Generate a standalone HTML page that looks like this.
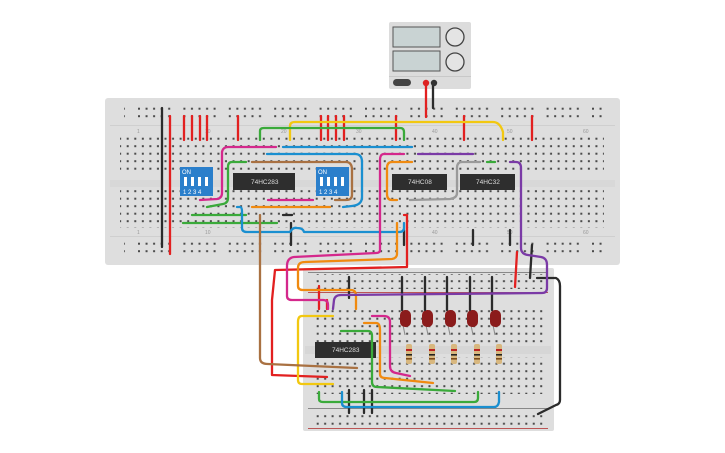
<!DOCTYPE html>
<html><head><style>
html,body{margin:0;padding:0;background:#fff;width:725px;height:453px;overflow:hidden}
svg{display:block}
text{font-family:"Liberation Sans",sans-serif}
</style></head><body>
<svg width="725" height="453" viewBox="0 0 725 453" xmlns="http://www.w3.org/2000/svg">
<defs>
<pattern id="h" x="124" y="0" width="7.56" height="7.5" patternUnits="userSpaceOnUse"><rect x="2.7" y="2.7" width="2" height="2" fill="#4a4a4a"/></pattern>
<pattern id="hr" x="138" y="0" width="45.4" height="7.5" patternUnits="userSpaceOnUse">
<rect x="0" y="2.7" width="2" height="2" fill="#4a4a4a"/><rect x="7.56" y="2.7" width="2" height="2" fill="#4a4a4a"/><rect x="15.1" y="2.7" width="2" height="2" fill="#4a4a4a"/><rect x="22.7" y="2.7" width="2" height="2" fill="#4a4a4a"/><rect x="30.2" y="2.7" width="2" height="2" fill="#4a4a4a"/></pattern>
<pattern id="hs" x="314" y="0" width="7.45" height="7.5" patternUnits="userSpaceOnUse"><rect x="2.7" y="2.7" width="2" height="2" fill="#4a4a4a"/></pattern>
</defs>
<!-- power supply -->
<rect x="389" y="22" width="82" height="67" rx="2" fill="#dcdcdc"/>
<rect x="393" y="27" width="47" height="20" fill="#c9d3d3" stroke="#555" stroke-width="1"/>
<rect x="393" y="51" width="47" height="20" fill="#c9d3d3" stroke="#555" stroke-width="1"/>
<circle cx="455" cy="37" r="9" fill="#e4e4e4" stroke="#444" stroke-width="1.3"/>
<circle cx="455" cy="62" r="9" fill="#e4e4e4" stroke="#444" stroke-width="1.3"/>
<rect x="393" y="79" width="18" height="7" rx="3.5" fill="#444"/>
<rect x="389" y="76" width="82" height="1" fill="#c8c8c8"/>
<!-- main breadboard -->
<rect x="105" y="98" width="515" height="167" rx="3" fill="#dedede"/>
<rect x="110" y="125" width="505" height="1" fill="#cfcfcf"/>
<rect x="110" y="236" width="505" height="1" fill="#cfcfcf"/>
<rect x="110" y="180" width="505" height="7" fill="#d8d8d8"/>
<rect x="124" y="106" width="480" height="16" fill="url(#hr)"/>
<rect x="124" y="241" width="480" height="16" fill="url(#hr)"/>
<rect x="120" y="136" width="484" height="38" fill="url(#h)"/>
<rect x="120" y="190" width="484" height="38" fill="url(#h)"/>
<g font-size="5" fill="#999"><text x="137" y="133">1</text><text x="205" y="133">10</text><text x="281" y="133">20</text><text x="356" y="133">30</text><text x="432" y="133">40</text><text x="507" y="133">50</text><text x="583" y="133">60</text>
<text x="137" y="234">1</text><text x="205" y="234">10</text><text x="432" y="234">40</text><text x="507" y="234">50</text><text x="583" y="234">60</text></g>
<!-- small breadboard -->
<rect x="303" y="268" width="251" height="163" rx="2" fill="#dedede"/>
<rect x="308" y="272" width="240" height="1" fill="#888"/><rect x="308" y="292" width="240" height="1" fill="#b55"/>
<rect x="308" y="408" width="240" height="1" fill="#888"/><rect x="308" y="428" width="240" height="1" fill="#b55"/>
<rect x="305" y="346" width="246" height="8" fill="#d6d6d6"/>
<rect x="314" y="274" width="230" height="15" fill="url(#hs)"/>
<rect x="314" y="410" width="230" height="15" fill="url(#hs)"/>
<rect x="314" y="306" width="230" height="37" fill="url(#hs)"/>
<rect x="314" y="357" width="230" height="37" fill="url(#hs)"/>
<!-- ICs and DIPs -->
<rect x="233" y="173" width="62" height="17" fill="#2e2e2e"/><text x="251" y="184" font-size="6.5" fill="#ddd" font-family="Liberation Mono">74HC283</text>
<rect x="392" y="174" width="55" height="16" fill="#2e2e2e"/><text x="408" y="184" font-size="6.5" fill="#ddd" font-family="Liberation Mono">74HC08</text>
<rect x="460" y="174" width="55" height="16" fill="#2e2e2e"/><text x="476" y="184" font-size="6.5" fill="#ddd" font-family="Liberation Mono">74HC32</text>
<rect x="315" y="342" width="61" height="16" fill="#2e2e2e"/><text x="332" y="352" font-size="6.5" fill="#ddd" font-family="Liberation Mono">74HC283</text>
<g fill="#2b7fcb"><rect x="180" y="167" width="33" height="29"/><rect x="316" y="167" width="33" height="29"/></g>
<g fill="#fff" font-size="6"><text x="182" y="174">ON</text><text x="318" y="174">ON</text>
<text x="183" y="194">1 2 3 4</text><text x="319" y="194">1 2 3 4</text>
<rect x="184" y="177" width="3" height="9"/><rect x="191" y="177" width="3" height="9"/><rect x="198" y="177" width="3" height="9"/><rect x="205" y="177" width="3" height="9"/>
<rect x="320" y="177" width="3" height="9"/><rect x="327" y="177" width="3" height="9"/><rect x="334" y="177" width="3" height="9"/><rect x="341" y="177" width="3" height="9"/></g>
<!-- LEDs and resistors -->
<g stroke="#888" stroke-width="1"><line x1="403" y1="325" x2="405" y2="335"/><line x1="426" y1="325" x2="428" y2="335"/><line x1="448" y1="325" x2="450" y2="335"/><line x1="471" y1="325" x2="473" y2="335"/><line x1="493" y1="325" x2="495" y2="335"/></g>
<g fill="#8b1c1c"><rect x="400" y="310" width="11" height="17" rx="5"/><rect x="422" y="310" width="11" height="17" rx="5"/><rect x="445" y="310" width="11" height="17" rx="5"/><rect x="467" y="310" width="11" height="17" rx="5"/><rect x="490" y="310" width="11" height="17" rx="5"/></g>
<g fill="#d8b77e"><rect x="406" y="344" width="6" height="20" rx="2"/><rect x="429" y="344" width="6" height="20" rx="2"/><rect x="451" y="344" width="6" height="20" rx="2"/><rect x="474" y="344" width="6" height="20" rx="2"/><rect x="496" y="344" width="6" height="20" rx="2"/></g>
<!-- wires -->
<g fill="none" stroke-width="2.3" stroke-linecap="round" stroke-linejoin="round">
<g stroke="#e22020">
<path d="M184 116V140M192 116V140M200 116V140M207 116V140M238 116V140M321 116V140M328 116V140M336 116V140M344 116V140M396 116V140M464 116V140M532 116V140M170 116V254M426 82V117"/>
<path d="M404 215H407V267L275 270L272 300V375L327 377"/>
<path d="M319 286V309M327 300V309M515 287L517 252"/>
</g>
<g stroke="#2b2b2b"><path d="M162 108V247M433 82V108M291 223V245M283 215H292M349 390V413M364 390V413M372 390V413M349 277V298M402 277V310M425 277V310M447 277V310M470 277V310M492 277V310M530 278L532 245M537 278H556Q560 280 560 286V400Q560 404 556 405L538 414M404 230V245M473 230V245M510 230V245"/></g>
<path stroke="#f2c811" d="M290 140V126Q290 122 295 122H493Q500 122 503 132V140M333 316H302Q298 316 298 322V380Q298 384 302 384H333"/>
<path stroke="#3aaa3a" d="M260 140V131Q260 128 264 128H400Q404 128 404 132V140M246 162H232Q228 162 228 167V198Q228 203 223 204L207 207M192 215H246M183 223H277M487 162H495M341 331H368Q372 331 372 336V382Q372 387 377 387L455 391M319 392V399Q319 402 323 402H474Q478 402 478 398V392"/>
<path stroke="#1a8fd0" d="M283 147H412M267 154H355Q362 154 362 162V197Q362 205 352 206L343 207M237 207H240Q242 207 242 212V228Q242 232 247 232H290Q293 227 297 228Q303 228 304 232H399Q404 232 404 228V223M342 392V403Q342 407 347 407H494Q498 407 499 402V392"/>
<path stroke="#d4288c" d="M276 147H228Q223 147 222 152V193Q222 198 217 199L200 200M268 200H313M404 154H384Q380 154 380 160V250Q380 253 376 253L294 257Q287 258 287 266V296Q287 300 292 300H323Q328 300 328 305V309M372 316H384Q390 316 390 322V366Q390 372 396 373L410 376"/>
<path stroke="#a97142" d="M252 162H346Q352 162 352 170V195Q352 200 346 200H335M260 215V358Q260 364 268 364L357 368"/>
<path stroke="#f08a10" d="M412 162H392Q387 162 387 168V194Q387 200 392 200H397M252 207H330M397 223V254Q397 258 392 259L305 262Q298 262 298 268V286Q298 290 303 290H351Q356 290 356 296V309M364 323H376Q380 323 380 330V374Q380 378 385 378L433 383"/>
<path stroke="#7a3aa6" d="M418 154H473M510 162H516Q521 162 521 168V248Q521 254 528 255L541 257Q547 258 547 265V288Q547 293 542 293L341 295Q335 295 334 300L333 309"/>
<path stroke="#9a9a9a" d="M480 162H462Q457 162 457 168V193Q457 198 450 199L410 200"/>
</g>
<g fill="#b22"><rect x="406" y="349" width="6" height="2"/><rect x="429" y="349" width="6" height="2"/><rect x="451" y="349" width="6" height="2"/><rect x="474" y="349" width="6" height="2"/><rect x="496" y="349" width="6" height="2"/></g>
<g fill="#222"><rect x="406" y="354" width="6" height="1.6"/><rect x="429" y="354" width="6" height="1.6"/><rect x="451" y="354" width="6" height="1.6"/><rect x="474" y="354" width="6" height="1.6"/><rect x="496" y="354" width="6" height="1.6"/></g>
<g fill="#7a4a1a"><rect x="406" y="358" width="6" height="1.6"/><rect x="429" y="358" width="6" height="1.6"/><rect x="451" y="358" width="6" height="1.6"/><rect x="474" y="358" width="6" height="1.6"/><rect x="496" y="358" width="6" height="1.6"/></g>
<circle cx="426" cy="83" r="3.2" fill="#d22"/><circle cx="434" cy="83" r="3.2" fill="#333"/>
</svg>
</body></html>
